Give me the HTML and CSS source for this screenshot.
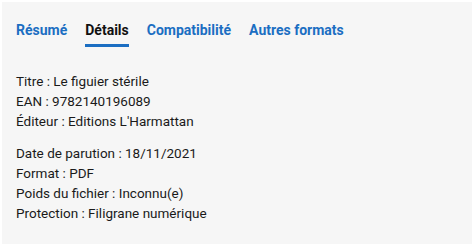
FILE: index.html
```html
<!DOCTYPE html>
<html lang="fr">
<head>
    <meta charset="UTF-8">
    <title>Détails du livre</title>
    <link rel="stylesheet" href="styles.css">
</head>
<body>
    <div class="panel">
        <!-- Onglets -->
        <nav class="tabs">
            <a class="tab">Résumé</a>
            <a class="tab active">Détails</a>
            <a class="tab">Compatibilité</a>
            <a class="tab">Autres formats</a>
        </nav>

        <div class="details">
            <ul class="group">
                <li>Titre : Le figuier stérile</li>
                <li>EAN : 9782140196089</li>
                <li>Éditeur : Editions L'Harmattan</li>
            </ul>
            <ul class="group">
                <li>Date de parution : 18/11/2021</li>
                <li>Format : PDF</li>
                <li>Poids du fichier : Inconnu(e)</li>
                <li>Protection : Filigrane numérique</li>
            </ul>
        </div>
    </div>
</body>
</html>
```

FILE: styles.css
```css
body {
    margin: 0;
    background: white;
    font-family: Roboto, "Noto Sans", sans-serif;
}

.panel {
    margin: 2px;
    height: 242px;
    background: #f6f6f6;
    box-sizing: border-box;
    padding: 18px 14px 0;
}

.tabs {
    display: flex;
    gap: 18px;
}

.tab {
    font-size: 14px;
    font-weight: 700;
    color: #1b6ec2;
    padding: 2px 0 5px;
    border-bottom: 3px solid transparent;
    line-height: 17px;
}

.tab.active {
    color: #111;
    border-bottom-color: #1b6ec2;
}

.details {
    margin-top: 25px;
}

.group {
    list-style: none;
    margin: 0 0 13px;
    padding: 0;
    font-size: 13.5px;
    color: #1a1a1a;
    line-height: 19.8px;
}
```
